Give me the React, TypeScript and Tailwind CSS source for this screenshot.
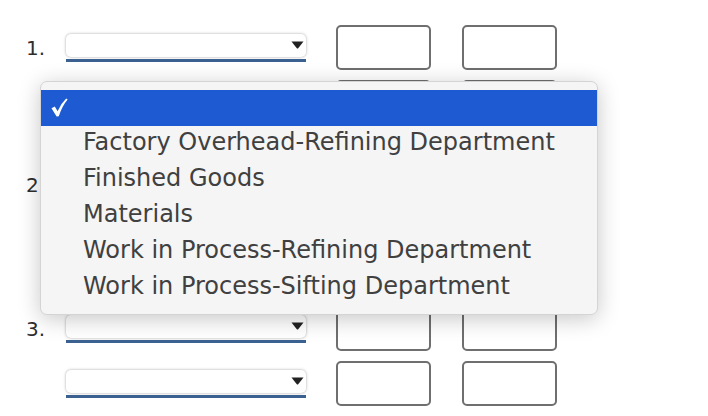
import React from 'react';

const options = [
  'Factory Overhead-Refining Department',
  'Finished Goods',
  'Materials',
  'Work in Process-Refining Department',
  'Work in Process-Sifting Department',
];

function SelectBox() {
  return (
    <div className="relative h-[28px] w-[240px]">
      <div className="flex h-[23px] w-full items-center justify-end rounded-[5px] bg-white pr-[2px] shadow-[0_0_3px_rgba(0,0,0,0.35)]">
        <svg width="13" height="8" viewBox="0 0 13 8">
          <path d="M0.5 0.5 L12.5 0.5 L7.2 7.2 Q6.5 8 5.8 7.2 Z" fill="#222" />
        </svg>
      </div>
      <div className="mt-[2px] h-[3.5px] w-full bg-[#3a6190]" />
    </div>
  );
}

function Cell() {
  return <div className="h-[45px] w-[95px] rounded-[5px] border-2 border-[#6f6f6f] bg-white" />;
}

function Line() {
  return (
    <div className="flex h-[45px] items-center">
      <SelectBox />
      <div className="ml-[30px]">
        <Cell />
      </div>
      <div className="ml-[31px]">
        <Cell />
      </div>
    </div>
  );
}

function Row({ label, lines = 1, extra = '' }: { label: string; lines?: number; extra?: string }) {
  return (
    <div className={`flex items-center ${extra}`}>
      <div className="w-[66px] shrink-0 pl-[26px] text-[20px] leading-none text-[#2e2e2e]">{label}</div>
      <div className="flex flex-col gap-[10px]">
        {Array.from({ length: lines }).map((_, i) => (
          <Line key={i} />
        ))}
      </div>
    </div>
  );
}

export default function App() {
  return (
    <div
      className="relative h-[416px] w-[708px] overflow-hidden bg-white"
      style={{ fontFamily: '"DejaVu Sans", Verdana, sans-serif' }}
    >
      <div className="flex flex-col gap-[10px] pt-[25px]">
        <Row label="1." />
        <Row label="2" lines={4} extra="pb-[6px]" />
        <Row label="3." />
        <Row label="" />
      </div>

      <div className="absolute left-[40px] top-[81px] w-[558px] rounded-[7px] border border-[#d4d4d4] bg-[#f5f5f5] py-[8px] shadow-[0_4px_22px_rgba(0,0,0,0.22)]">
        <div className="flex h-[36px] items-center bg-[#1e5bd2] pl-[10px] pb-[1px]">
          <svg width="17" height="19" viewBox="0 0 17 19">
            <path
              d="M0.5 10.2 L3.8 8.6 L6.6 13.2 Q10 5.5 15.2 0.6 L16.6 1.6 Q11.2 8 7.8 18.2 L5.6 18.4 Z"
              fill="#fff"
            />
          </svg>
        </div>
        {options.map((o) => (
          <div key={o} className="flex h-[36px] items-center pb-[4px] pl-[42px] text-[24px] text-[#404040]">
            {o}
          </div>
        ))}
      </div>
    </div>
  );
}
